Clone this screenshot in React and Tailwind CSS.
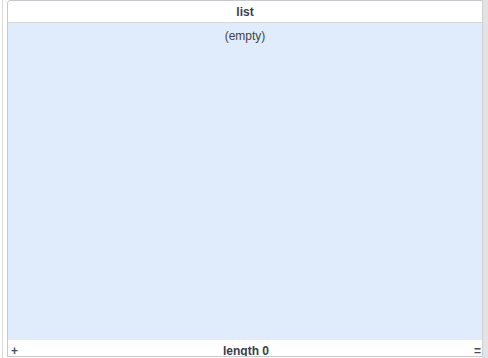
import React from 'react';

const App = () => {
  return (
    <div className="w-[488px] h-[358px] overflow-hidden bg-white flex text-[12px] text-[#3a3d4a]" style={{ fontFamily: '"Liberation Sans", Arial, sans-serif' }}>
      <div className="w-[7px] h-full flex">
        <div className="w-[2px]" />
        <div className="w-px h-full bg-[#d9d9d9]" />
      </div>
      <div className="flex-1 flex flex-col h-[357px] border-l border-t border-b border-[#c8c9cf] rounded-tl-[4px] overflow-hidden">
        <div className="h-[22px] shrink-0 flex items-center justify-center font-bold border-b border-[#d6d6d6] bg-white">list</div>
        <div className="flex-1 bg-[#e0ecfc] flex justify-center pt-[4px] text-[#444]">(empty)</div>
        <div className="h-[16px] shrink-0 bg-white flex items-start pl-[3px] pr-[1px] pt-[5px] leading-[13px] overflow-hidden">
          <span className="w-[10px] font-bold text-[#4a4e60]">+</span>
          <span className="flex-1 text-center font-bold">length 0</span>
          <span className="w-[10px] text-right font-bold text-[#4a4e60]">=</span>
        </div>
      </div>
      <div className="w-[6px] h-full bg-[#e3e3e3] border-l border-[#cfcfcf]" />
    </div>
  );
};

export default App;
